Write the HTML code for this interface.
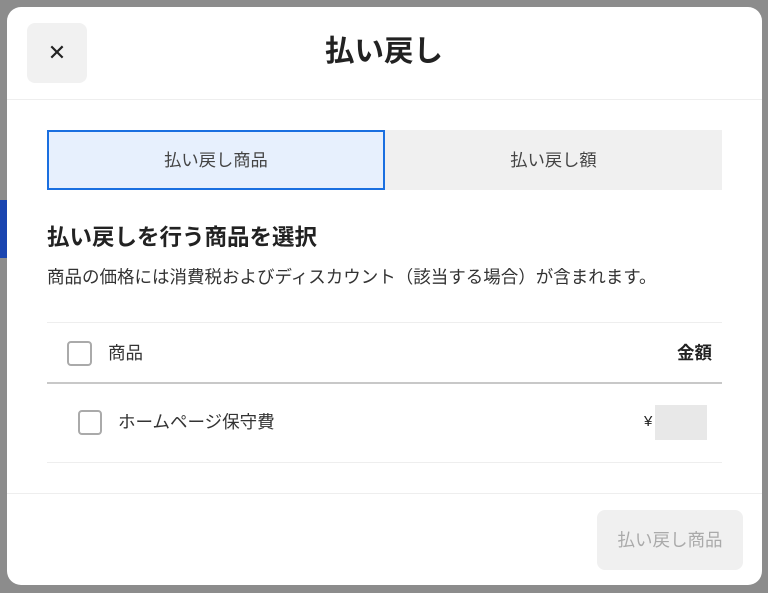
<!DOCTYPE html>
<html><head><meta charset="utf-8"><style>
*{margin:0;padding:0;box-sizing:border-box}
body{width:768px;height:593px;background:#8c8c8c;position:relative;overflow:hidden;font-family:"Liberation Sans","Noto Sans CJK JP",sans-serif;color:#222}
.a{position:absolute}
.modal{left:7px;top:7px;width:755px;height:578px;background:#fff;border-radius:14px}
.cb{border:2px solid #aaa;border-radius:4px;background:#fff}
</style></head><body>
<div class="a" style="left:0;top:200px;width:7px;height:58px;background:#1a45b0"></div>
<div class="a modal"></div>
<div class="a" style="left:27px;top:23px;width:60px;height:60px;background:#f1f1f1;border-radius:8px;font-size:22px;line-height:60px;text-align:center;color:#222">✕</div>
<div class="a" style="left:0;width:768px;top:33px;text-align:center;font-size:29.5px;font-weight:bold;line-height:38px">払い戻し</div>
<div class="a" style="left:7px;top:99px;width:755px;height:1px;background:#eee"></div>
<div class="a" style="left:47px;top:130px;width:338px;height:60px;background:#e7f0fd;border:2px solid #1a6fe0;font-size:17.3px;line-height:56px;text-align:center;color:#444">払い戻し商品</div>
<div class="a" style="left:385px;top:130px;width:337px;height:60px;background:#f0f0f0;font-size:17.3px;line-height:60px;text-align:center;color:#444">払い戻し額</div>
<div class="a" style="left:47px;top:223px;font-size:22.5px;font-weight:bold;line-height:30px">払い戻しを行う商品を選択</div>
<div class="a" style="left:47px;top:265px;font-size:17.5px;line-height:24px;color:#333">商品の価格には消費税およびディスカウント（該当する場合）が含まれます。</div>
<div class="a" style="left:47px;top:322px;width:675px;height:1px;background:#eee"></div>
<div class="a cb" style="left:67px;top:341px;width:25px;height:25px"></div>
<div class="a" style="left:108px;top:341px;font-size:17.5px;line-height:24px;color:#333">商品</div>
<div class="a" style="left:600px;width:112px;text-align:right;top:341px;font-size:17.5px;font-weight:bold;line-height:24px">金額</div>
<div class="a" style="left:47px;top:382px;width:675px;height:2px;background:#c8c8c8"></div>
<div class="a cb" style="left:78px;top:410px;width:24px;height:25px"></div>
<div class="a" style="left:118px;top:410px;font-size:17.5px;line-height:24px;color:#333">ホームページ保守費</div>
<div class="a" style="left:644px;top:412px;font-size:15px;line-height:20px">¥</div>
<div class="a" style="left:655px;top:405px;width:52px;height:35px;background:#e8e8e8"></div>
<div class="a" style="left:47px;top:462px;width:675px;height:1px;background:#eee"></div>
<div class="a" style="left:7px;top:493px;width:755px;height:1px;background:#eee"></div>
<div class="a" style="left:597px;top:510px;width:146px;height:60px;background:#f0f0f0;border-radius:8px;font-size:17.5px;line-height:60px;text-align:center;color:#aaa">払い戻し商品</div>
</body></html>
